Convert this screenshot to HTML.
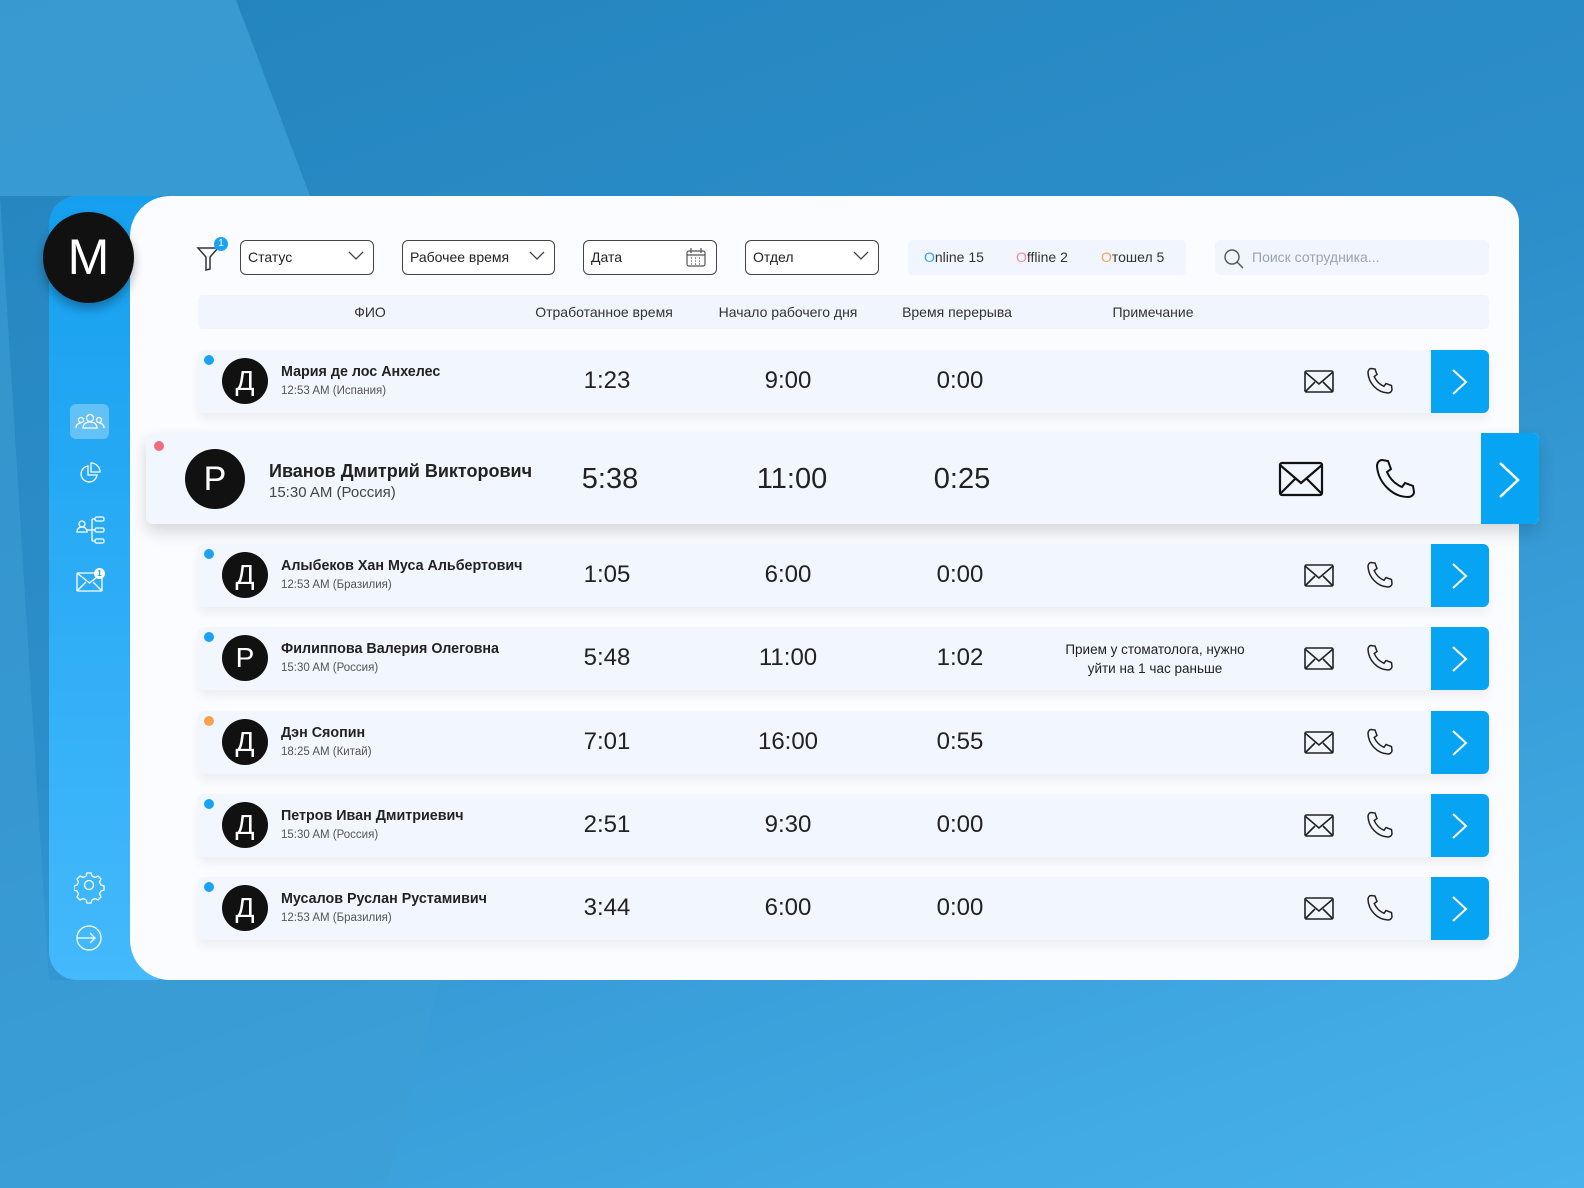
<!DOCTYPE html>
<html><head><meta charset="utf-8">
<style>
*{margin:0;padding:0;box-sizing:border-box}
body{width:1584px;height:1188px;overflow:hidden;position:relative;font-family:"Liberation Sans","DejaVu Sans",sans-serif;color:#222;background:linear-gradient(160deg,#2384bd 0%,#2d8fca 45%,#48b2ec 100%)}
.abs{position:absolute}
.card{left:130px;top:196px;width:1389px;height:784px;background:#fbfcff;border-radius:40px 26px 26px 40px}
.side{left:49px;top:196px;width:110px;height:784px;border-radius:28px 0 0 28px;background:linear-gradient(180deg,#15a0ef,#44b9fc)}
.dd{top:240px;height:35px;border:1.5px solid #444;border-radius:6px;background:#fff;font-size:14px;padding:0 0 0 7px;line-height:32px}
.dd svg{position:absolute;right:9px;top:10px}
.hdr{left:198px;top:295px;width:1291px;height:34px;background:#f0f5fe;border-radius:5px;font-size:14px;color:#333}
.hdr span{position:absolute;top:9px;transform:translateX(-50%);white-space:nowrap}
.row{left:198px;width:1291px;height:63px;background:#f2f6fe;border-radius:6px;box-shadow:0 6px 10px rgba(0,0,0,.06)}
.row .av{position:absolute;left:24px;top:8px;width:46px;height:46px;border-radius:50%;background:#111;color:#fff;font-size:28px;text-align:center;line-height:46px}
.row .dot{position:absolute;left:6px;top:5px;width:10px;height:10px;border-radius:50%;background:#1aa3f5}
.row .nm{position:absolute;left:83px;top:14px;font-size:14.3px;font-weight:bold;white-space:nowrap;color:#222}
.row .sb{position:absolute;left:83px;top:35px;font-size:11.5px;color:#555;white-space:nowrap}
.row .n{position:absolute;top:17px;font-size:24px;transform:translateX(-50%);color:#222}
.row .btn{position:absolute;right:0;top:0;width:58px;height:63px;background:#07a4f4;border-radius:0 6px 6px 0}
.row .ml{position:absolute;left:1106px;top:20px}
.row .ph{position:absolute;left:1168px;top:17px}
.note{position:absolute;left:847px;top:13px;width:220px;text-align:center;font-size:13.5px;line-height:19px;color:#222}
</style></head><body>
<svg class="abs" style="left:0;top:0" width="1584" height="1188">
<polygon points="0,0 236,0 310,196 0,196" fill="#3d9fd6" opacity=".8"/>
<polygon points="0,196 0,1188 385,1188 440,980 49,980" fill="#3d9fd6" opacity=".6"/>
</svg>
<div class="abs side"></div>
<div class="abs card"></div>
<div class="abs" style="left:43px;top:212px;width:91px;height:91px;border-radius:50%;background:#111;color:#fff;font-size:50px;text-align:center;line-height:91px;box-shadow:0 6px 10px rgba(0,0,0,.3)">M</div>

<div class="abs" style="left:70px;top:404px;width:39px;height:35px;border-radius:6px;background:rgba(255,255,255,.3)"></div>
<svg class="abs" style="left:70px;top:395px" width="40" height="200" fill="none" stroke="#fff" stroke-width="1.3">
<circle cx="20" cy="23" r="3.5"/><path d="M13 33c0-4 3-6 7-6s7 2 7 6z"/>
<circle cx="11" cy="25" r="2.5"/><path d="M6 33c0-3 2-5 5-5"/><circle cx="29" cy="25" r="2.5"/><path d="M34 33c0-3-2-5-5-5"/>
<path d="M18 71a8 8 0 1 0 9 9h-9z"/><path d="M21 68v9h9a9 9 0 0 0-9-9z"/>
<circle cx="12" cy="129" r="3"/><path d="M7 137c0-3 2-5 5-5s5 2 5 5z"/>
<path d="M17 135h5M22 124v22M22 124h3M22 135h3M22 146h3"/><rect x="25" y="122" width="9" height="4" rx="1.5"/><rect x="25" y="133" width="9" height="4" rx="1.5"/><rect x="25" y="144" width="9" height="4" rx="1.5"/>
<rect x="7" y="178" width="25" height="18" rx="1"/><path d="M7 178l12.5 10 12.5-10M7 196l9-9M32 196l-9-9"/>
</svg>
<div class="abs" style="left:94px;top:568px;width:11px;height:11px;border-radius:50%;background:#fff;color:#1aa3ef;font-size:8px;font-weight:bold;text-align:center;line-height:11px">1</div>
<svg class="abs" style="left:74px;top:870px" width="32" height="84" fill="none" stroke="#fff" stroke-width="1.3">
<circle cx="15" cy="15" r="4.5"/>
<path d="M13 3h4l1 3 3 1.5 3-1.5 3 3-1.5 3 1.5 3 3 1v4l-3 1-1.5 3 1.5 3-3 3-3-1.5-3 1.5-1 3h-4l-1-3-3-1.5-3 1.5-3-3 1.5-3-1.5-3-3-1v-4l3-1 1.5-3-1.5-3 3-3 3 1.5 3-1.5z"/>
<circle cx="15" cy="68" r="12"/><path d="M3 68h18M16 63l5 5-5 5"/>
</svg>

<svg class="abs" style="left:196px;top:244px" width="28" height="28" fill="none" stroke="#333" stroke-width="1.5"><path d="M2 4h20l-8 9v12l-4 1V13z"/></svg>
<div class="abs" style="left:214px;top:237px;width:14px;height:14px;border-radius:50%;background:#1aa3f5;color:#fff;font-size:10px;text-align:center;line-height:14px">1</div>
<div class="abs dd" style="left:240px;width:134px">Статус<svg width="16" height="10"><path d="M1 1l7 7 7-7" fill="none" stroke="#444" stroke-width="1.3"/></svg></div>
<div class="abs dd" style="left:402px;width:153px">Рабочее время<svg width="16" height="10"><path d="M1 1l7 7 7-7" fill="none" stroke="#444" stroke-width="1.3"/></svg></div>
<div class="abs dd" style="left:583px;width:134px">Дата<svg width="20" height="20" style="top:6px;right:10px" fill="none" stroke="#555" stroke-width="1.2"><rect x="1" y="4" width="18" height="15" rx="2"/><path d="M1 8h18M5 1v5M15 1v5M5 11h1M9 11h1M13 11h1M5 14h1M9 14h1M13 14h1M5 17h1M9 17h1M13 17h1"/></svg></div>
<div class="abs dd" style="left:745px;width:134px">Отдел<svg width="16" height="10"><path d="M1 1l7 7 7-7" fill="none" stroke="#444" stroke-width="1.3"/></svg></div>
<div class="abs" style="left:908px;top:240px;width:278px;height:35px;background:#f0f5fe;border-radius:5px;font-size:14px;line-height:35px;color:#333">
<span class="abs" style="left:16px"><span style="color:#2aa6f5">O</span>nline 15</span>
<span class="abs" style="left:108px"><span style="color:#f58a9a">O</span>ffline 2</span>
<span class="abs" style="left:193px"><span style="color:#f7a24e">O</span>тошел 5</span></div>
<div class="abs" style="left:1215px;top:240px;width:274px;height:35px;background:#f0f5fe;border-radius:5px;font-size:14px;line-height:35px;color:#9aa3b0">
<svg class="abs" style="left:8px;top:8px" width="22" height="22" fill="none" stroke="#555" stroke-width="1.4"><circle cx="9" cy="9" r="7"/><path d="M14 14l6 6"/></svg>
<span class="abs" style="left:37px">Поиск сотрудника...</span></div>

<div class="abs hdr"><span style="left:172px">ФИО</span><span style="left:406px">Отработанное время</span><span style="left:590px">Начало рабочего дня</span><span style="left:759px">Время перерыва</span><span style="left:955px">Примечание</span></div>

<div class="abs" style="left:146px;top:433px;width:1393px;height:91px;background:#f2f6fe;border-radius:6px;box-shadow:0 8px 16px rgba(0,0,0,.15)">
<div class="abs" style="left:8px;top:8px;width:10px;height:10px;border-radius:50%;background:#f06b80"></div>
<div class="abs" style="left:39px;top:16px;width:60px;height:60px;border-radius:50%;background:#111;color:#fff;font-size:34px;text-align:center;line-height:60px">P</div>
<div class="abs" style="left:123px;top:28px;font-size:18px;font-weight:bold;white-space:nowrap">Иванов Дмитрий Викторович</div>
<div class="abs" style="left:123px;top:51px;font-size:15px;color:#444;white-space:nowrap">15:30 AM (Россия)</div>
<div class="abs" style="left:464px;top:30px;font-size:29px;transform:translateX(-50%)">5:38</div>
<div class="abs" style="left:646px;top:30px;font-size:29px;transform:translateX(-50%)">11:00</div>
<div class="abs" style="left:816px;top:30px;font-size:29px;transform:translateX(-50%)">0:25</div>
<svg class="abs" style="left:1132px;top:28px" width="46" height="36" fill="none" stroke="#111" stroke-width="2.2"><rect x="2" y="2" width="42" height="32" rx="2"/><path d="M2 4l21 18 21-18M2 33l15-15M44 33l-15-15"/></svg>
<svg class="abs" style="left:1228px;top:25px" width="44" height="44" fill="none" stroke="#111" stroke-width="2"><path d="M8 2l6 1 3 8-4 3c3 7 8 12 15 15l3-4 8 3 1 6c0 3-3 5-6 5C18 39 4 24 3 8c0-3 2-6 5-6z"/></svg>
<div class="abs" style="right:0;top:0;width:58px;height:91px;background:#07a4f4;border-radius:0 6px 6px 0"><svg class="abs" style="left:16px;top:28px" width="26" height="38"><path d="M3 2l18 17-18 17" fill="none" stroke="#fff" stroke-width="2.5"/></svg></div>
</div>

<div id="rows"></div>
<script>
const R=[[350,'Д','Мария де лос Анхелес','12:53 AM (Испания)','1:23','9:00','0:00','','#1aa3f5'],
[544,'Д','Алыбеков Хан Муса Альбертович','12:53 AM (Бразилия)','1:05','6:00','0:00','','#1aa3f5'],
[627,'P','Филиппова Валерия Олеговна','15:30 AM (Россия)','5:48','11:00','1:02','Прием у стоматолога, нужно<br>уйти на 1 час раньше','#1aa3f5'],
[711,'Д','Дэн Сяопин','18:25 AM (Китай)','7:01','16:00','0:55','','#f7a24e'],
[794,'Д','Петров Иван Дмитриевич','15:30 AM (Россия)','2:51','9:30','0:00','','#1aa3f5'],
[877,'Д','Мусалов Руслан Рустамивич','12:53 AM (Бразилия)','3:44','6:00','0:00','','#1aa3f5']];
let h='';
for(const r of R){h+=`<div class="abs row" style="top:${r[0]}px"><div class="dot" style="background:${r[8]}"></div><div class="av">${r[1]}</div><div class="nm">${r[2]}</div><div class="sb">${r[3]}</div><div class="n" style="left:409px">${r[4]}</div><div class="n" style="left:590px">${r[5]}</div><div class="n" style="left:762px">${r[6]}</div>${r[7]?'<div class="note">'+r[7]+'</div>':''}<svg class="ml" width="30" height="23" fill="none" stroke="#222" stroke-width="1.6"><rect x="1" y="1" width="28" height="21" rx="1.5"/><path d="M1 2l14 12 14-12M1 22l10-10M29 22l-10-10"/></svg><svg class="ph" width="28" height="28" fill="none" stroke="#222" stroke-width="1.5"><path d="M5 1.5l4 .5 2 5.5-2.8 2c2 4.5 5 7.8 9.8 9.8l2-2.8 5.5 2 .5 4c0 2-2 3.5-4 3.5C11 25.5 2.5 16 2 5.5c0-2 1.3-4 3-4z"/></svg><div class="btn"><svg style="position:absolute;left:20px;top:18px" width="18" height="28"><path d="M2 2l13 12-13 12" fill="none" stroke="#fff" stroke-width="2"/></svg></div></div>`}
document.getElementById('rows').innerHTML=h;
</script>
</body></html>
